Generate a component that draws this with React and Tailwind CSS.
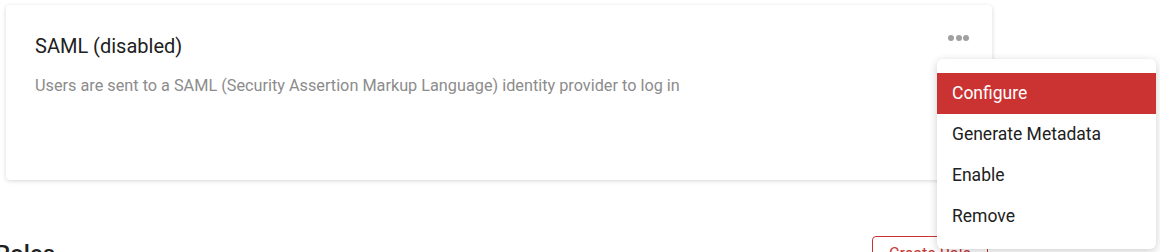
import React from "react";

const MenuItem = ({ label, active }) => (
  <div
    className={
      "h-[41px] flex items-center px-[15px] text-[17.5px] " +
      (active ? "bg-[#cb3333] text-white" : "text-[#212121]")
    }
  >
    {label}
  </div>
);

export default function App() {
  return (
    <div
      className="relative w-[1160px] h-[252px] overflow-hidden bg-white"
      style={{ fontFamily: "Roboto, 'Liberation Sans', sans-serif" }}
    >
      <div className="pl-[6px] pt-[5px]">
        <div className="relative w-[986px] h-[175px] rounded-[4px] bg-white shadow-[0_1px_4px_rgba(0,0,0,0.16)] px-[29px] pt-[28px]">
          <h2 className="text-[20px] leading-[26px] text-[#212121]">SAML (disabled)</h2>
          <p className="mt-[16px] text-[16.25px] leading-[22px] text-[#8c8c8c]">
            Users are sent to a SAML (Security Assertion Markup Language) identity provider to log in
          </p>
          <div className="absolute top-[29px] right-[22px] flex gap-[1.5px] p-[1px]">
            <span className="w-[6px] h-[6px] rounded-full bg-[#a0a0a0]"></span>
            <span className="w-[6px] h-[6px] rounded-full bg-[#a0a0a0]"></span>
            <span className="w-[6px] h-[6px] rounded-full bg-[#a0a0a0]"></span>
          </div>
        </div>
      </div>

      <div className="mt-[56px] w-[988px] flex justify-between items-start">
        <h2 className="ml-[-5px] mt-[4px] text-[24px] font-medium leading-[28px] text-[#212121]">Roles</h2>
        <button className="h-[36px] px-[16px] rounded-[4px] border border-[#cb3333] text-[#cb3333] text-[16px]">
          Create Role
        </button>
      </div>

      <div className="absolute left-[937px] top-[59px] w-[219px] rounded-[6px] bg-white shadow-[0_2px_8px_rgba(0,0,0,0.2)] pt-[14px] pb-[12px]">
        <MenuItem label="Configure" active />
        <MenuItem label="Generate Metadata" />
        <MenuItem label="Enable" />
        <MenuItem label="Remove" />
      </div>
    </div>
  );
}
